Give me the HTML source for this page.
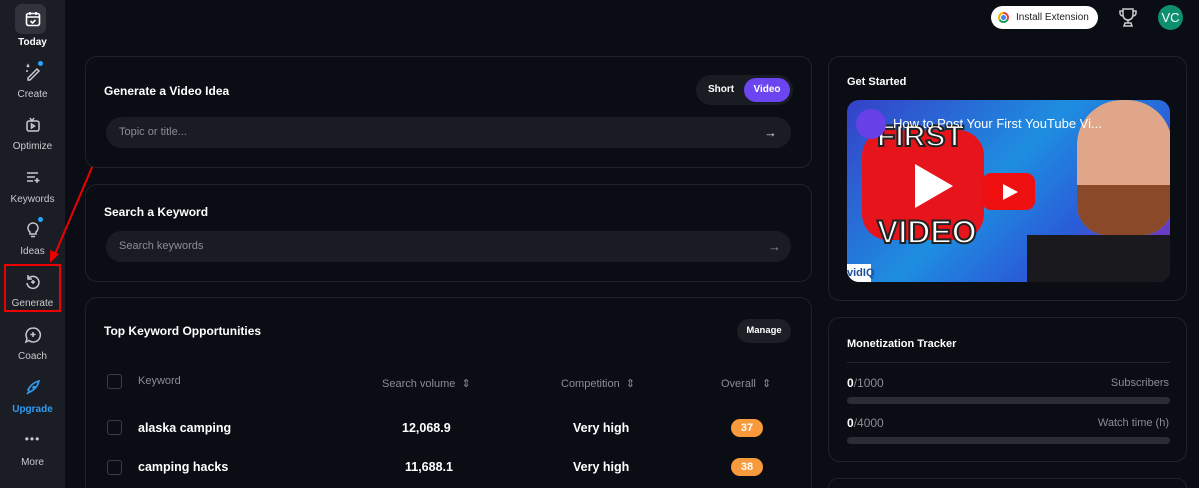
<!DOCTYPE html>
<html style="width:1199px;height:488px;overflow:hidden"><head><style>
*{box-sizing:border-box;margin:0;padding:0}
body{width:1199px;height:488px;overflow:hidden;background:#0b0d14;font-family:"Liberation Sans",sans-serif;color:#fff;position:relative}
.side{position:absolute;left:0;top:0;width:65px;height:488px;background:#1b1d24}
.nav{position:absolute;left:0;width:65px;text-align:center;font-size:10px;color:#c8cad0}
.nav svg{display:block;margin:0 auto 5px}
.card{position:absolute;border:1px solid #1f222b;border-radius:12px;background:#0b0d14}
.h{position:absolute;font-size:12px;font-weight:bold}
.inp{position:absolute;background:#1a1c23;border-radius:16px;height:31px;font-size:11px;color:#8a8d95;padding:0 13px;line-height:31px}
.th{position:absolute;font-size:11px;color:#8a8d96}
.td{position:absolute;font-size:12.5px;font-weight:bold}
.cb{position:absolute;width:15px;height:15px;border:1px solid #3a3d46;border-radius:3px}
.badge{position:absolute;width:32px;height:18px;border-radius:9px;background:#f79a3b;font-size:11px;font-weight:bold;text-align:center;line-height:18px}
</style></head><body>
<div class="side">
 <div style="position:absolute;left:15px;top:4px;width:31px;height:30px;background:#30333b;border-radius:7px"></div>
 <div class="nav" style="top:10px;color:#fff;font-weight:bold"><svg width="18" height="18" viewBox="0 0 18 18" fill="none" stroke="#fff" stroke-width="1.6"><rect x="2.5" y="3.5" width="13" height="12" rx="2"/><path d="M2.5 7h13M6 2v3M12 2v3M6.5 11l2 2 3-3"/></svg><div style="margin-top:9px">Today</div></div>
 <div class="nav" style="top:62px"><svg width="20" height="20" viewBox="0 0 20 20" fill="none" stroke="#c8cad0" stroke-width="1.5"><path d="M5 16l9-9 2 2-9 9H5z"/><path d="M4 5l1-2 1 2M3 9h2"/></svg><div style="margin-top:7px">Create</div></div>
 <div style="position:absolute;left:38px;top:61px;width:5px;height:5px;border-radius:50%;background:#2aa5ff"></div>
 <div class="nav" style="top:116px"><svg width="18" height="18" viewBox="0 0 18 18" fill="none" stroke="#c8cad0" stroke-width="1.5"><rect x="3" y="5" width="12" height="10" rx="2"/><path d="M7.5 8v4l3-2z M6 2l2 3 2-3"/></svg><div style="margin-top:7px">Optimize</div></div>
 <div class="nav" style="top:168px"><svg width="18" height="18" viewBox="0 0 18 18" fill="none" stroke="#c8cad0" stroke-width="1.5"><path d="M3 5h11M3 9h8M3 13h6M13 10v5M10.5 12.5h5"/></svg><div style="margin-top:8px">Keywords</div></div>
 <div style="position:absolute;left:38px;top:217px;width:5px;height:5px;border-radius:50%;background:#2aa5ff"></div>
 <div class="nav" style="top:221px"><svg width="18" height="18" viewBox="0 0 18 18" fill="none" stroke="#c8cad0" stroke-width="1.5"><path d="M9 2a5 5 0 0 0-3 9v2h6v-2a5 5 0 0 0-3-9zM7 15.5h4"/></svg><div style="margin-top:7px">Ideas</div></div>
 <div class="nav" style="top:273px"><svg width="18" height="18" viewBox="0 0 18 18" fill="none" stroke="#c8cad0" stroke-width="1.5"><path d="M4 6a6 6 0 1 1-1 4M4 2v4h4M9 7v4M7 9h4"/></svg><div style="margin-top:7px">Generate</div></div>
 <div style="position:absolute;left:4px;top:264px;width:57px;height:48px;border:2px solid #e00"></div>
 <div class="nav" style="top:326px"><svg width="18" height="18" viewBox="0 0 18 18" fill="none" stroke="#c8cad0" stroke-width="1.5"><path d="M9 2a7 7 0 1 1-4 12.5L2 16l1-3.5A7 7 0 0 1 9 2zM9 6v5M6.5 8.5h5"/></svg><div style="margin-top:7px">Coach</div></div>
 <div class="nav" style="top:379px;color:#2f9cf4;font-weight:bold"><svg width="18" height="18" viewBox="0 0 18 18" fill="none" stroke="#2f9cf4" stroke-width="1.6"><path d="M6 12l-3 3M4 11c3-6 7-8 11-9-1 4-3 8-9 11zM10 7.5a1 1 0 1 0 .1 0"/></svg><div style="margin-top:7px">Upgrade</div></div>
 <div class="nav" style="top:432px;font-size:12px;letter-spacing:1px">•••</div>
 <div class="nav" style="top:457px">More</div>
</div>
<svg style="position:absolute;left:0;top:0" width="120" height="300"><line x1="96" y1="158" x2="55" y2="254" stroke="#e00" stroke-width="2"/><path d="M50 263l0-13 9 4z" fill="#e00"/></svg>

<div style="position:absolute;left:991px;top:6px;width:107px;height:23px;background:#fff;border-radius:12px;font-size:10px;color:#222;padding-left:25px;line-height:23px">Install Extension</div>
<div style="position:absolute;left:998px;top:12px;width:11px;height:11px;border-radius:50%;background:conic-gradient(#db4437 0 33%,#0f9d58 0 66%,#f4b400 0);"></div>
<div style="position:absolute;left:1001px;top:15px;width:5px;height:5px;border-radius:50%;background:#4285f4;box-shadow:0 0 0 1px #fff"></div>
<svg style="position:absolute;left:1117px;top:6px" width="22" height="22" viewBox="0 0 22 22" fill="none" stroke="#ccc" stroke-width="1.5"><path d="M6 3h10v6a5 5 0 0 1-10 0zM6 5H3v2a3 3 0 0 0 3 3M16 5h3v2a3 3 0 0 1-3 3M11 14v3M7 20h8l-1-3H8z"/></svg>
<div style="position:absolute;left:1158px;top:5px;width:25px;height:25px;border-radius:50%;background:#0e8f6d;font-size:13px;text-align:center;line-height:25px">VC</div>

<div class="card" style="left:85px;top:56px;width:727px;height:112px">
 <div class="h" style="left:18px;top:27px">Generate a Video Idea</div>
 <div style="position:absolute;left:610px;top:18px;width:97px;height:30px;background:#1a1c23;border-radius:15px"></div>
 <div style="position:absolute;left:622px;top:18px;font-size:10px;font-weight:bold;line-height:30px">Short</div>
 <div style="position:absolute;left:658px;top:21px;width:46px;height:24px;background:#6b46f0;border-radius:12px;font-size:10px;font-weight:bold;text-align:center;line-height:24px">Video</div>
 <div class="inp" style="left:20px;top:60px;width:685px">Topic or title...<span style="position:absolute;right:14px;top:0;color:#ddd;font-size:13px">→</span></div>
</div>
<div class="card" style="left:85px;top:184px;width:727px;height:98px">
 <div class="h" style="left:18px;top:20px">Search a Keyword</div>
 <div class="inp" style="left:20px;top:46px;width:685px">Search keywords<span style="position:absolute;right:10px;top:0;color:#888;font-size:13px">→</span></div>
</div>
<div class="card" style="left:85px;top:297px;width:727px;height:200px">
 <div class="h" style="left:18px;top:26px">Top Keyword Opportunities</div>
 <div style="position:absolute;left:651px;top:21px;width:54px;height:24px;background:#1d1f26;border-radius:12px;font-size:9.5px;font-weight:bold;text-align:center;line-height:24px">Manage</div>
 <div class="cb" style="left:21px;top:76px"></div><div class="th" style="left:52px;top:77px">Keyword</div>
 <div class="th" style="left:296px;top:79px">Search volume &nbsp;⇕</div>
 <div class="th" style="left:475px;top:79px">Competition &nbsp;⇕</div>
 <div class="th" style="left:635px;top:79px">Overall &nbsp;⇕</div>
 <div class="cb" style="left:21px;top:122px"></div><div class="td" style="left:52px;top:123px">alaska camping</div>
 <div class="td" style="left:316px;top:123px">12,068.9</div><div class="td" style="left:487px;top:123px">Very high</div>
 <div class="badge" style="left:645px;top:121px">37</div>
 <div class="cb" style="left:21px;top:162px"></div><div class="td" style="left:52px;top:162px">camping hacks</div>
 <div class="td" style="left:319px;top:162px">11,688.1</div><div class="td" style="left:487px;top:162px">Very high</div>
 <div class="badge" style="left:645px;top:160px">38</div>
</div>

<div class="card" style="left:828px;top:56px;width:359px;height:245px">
 <div class="h" style="left:18px;top:19px;font-size:11px">Get Started</div>
 <div style="position:absolute;left:18px;top:43px;width:323px;height:182px;border-radius:12px;overflow:hidden;background:linear-gradient(135deg,#3540c8,#1e8ee0 45%,#2a5cd8 70%,#8a2bb8)">
  <div style="position:absolute;left:15px;top:30px;width:122px;height:110px;background:#e8141c;border-radius:26px"></div>
  <div style="position:absolute;left:68px;top:64px;width:0;height:0;border-left:38px solid #fff;border-top:22px solid transparent;border-bottom:22px solid transparent"></div>
  <div style="position:absolute;left:30px;top:20px;font-size:30px;font-weight:900;color:#fff;-webkit-text-stroke:2px #222">FIRST</div>
  <div style="position:absolute;left:30px;top:114px;font-size:32px;font-weight:900;color:#fff;-webkit-text-stroke:2px #222">VIDEO</div>
  <div style="position:absolute;left:230px;top:0;width:95px;height:135px;background:#e0a68a;border-radius:45px 45px 30px 30px"></div>
  <div style="position:absolute;left:230px;top:85px;width:95px;height:50px;background:#8a4a2a;border-radius:0 0 30px 30px"></div>
  <div style="position:absolute;left:180px;top:135px;width:145px;height:50px;background:#1a1a1e"></div>
  <div style="position:absolute;left:135px;top:73px;width:53px;height:37px;background:#ee1010;border-radius:9px"></div>
  <div style="position:absolute;left:156px;top:84px;width:0;height:0;border-left:15px solid #fff;border-top:8px solid transparent;border-bottom:8px solid transparent"></div>
  <div style="position:absolute;left:9px;top:9px;width:30px;height:30px;border-radius:50%;background:#6840e8"></div>
  <div style="position:absolute;left:46px;top:16px;font-size:13px;color:#fff">How to Post Your First YouTube Vi...</div>
  <div style="position:absolute;left:0;top:164px;width:24px;height:18px;background:#fff;font-size:11px;font-weight:bold;color:#1a4fa0;line-height:18px">vidIQ</div>
 </div>
</div>
<div class="card" style="left:828px;top:317px;width:359px;height:145px">
 <div class="h" style="left:18px;top:20px;font-size:11px">Monetization Tracker</div>
 <div style="position:absolute;left:18px;top:44px;width:323px;height:1px;background:#23262e"></div>
 <div style="position:absolute;left:18px;top:58px;font-size:12px;color:#8a8d95"><b style="color:#fff">0</b>/1000</div>
 <div style="position:absolute;right:17px;top:59px;font-size:11px;color:#8a8d95">Subscribers</div>
 <div style="position:absolute;left:18px;top:79px;width:323px;height:7px;border-radius:4px;background:#2a2d35"></div>
 <div style="position:absolute;left:18px;top:98px;font-size:12px;color:#8a8d95"><b style="color:#fff">0</b>/4000</div>
 <div style="position:absolute;right:17px;top:99px;font-size:11px;color:#8a8d95">Watch time (h)</div>
 <div style="position:absolute;left:18px;top:119px;width:323px;height:7px;border-radius:4px;background:#2a2d35"></div>
</div>
<div class="card" style="left:828px;top:478px;width:359px;height:10px;border-bottom:none;border-radius:12px 12px 0 0"></div>
</body></html>
